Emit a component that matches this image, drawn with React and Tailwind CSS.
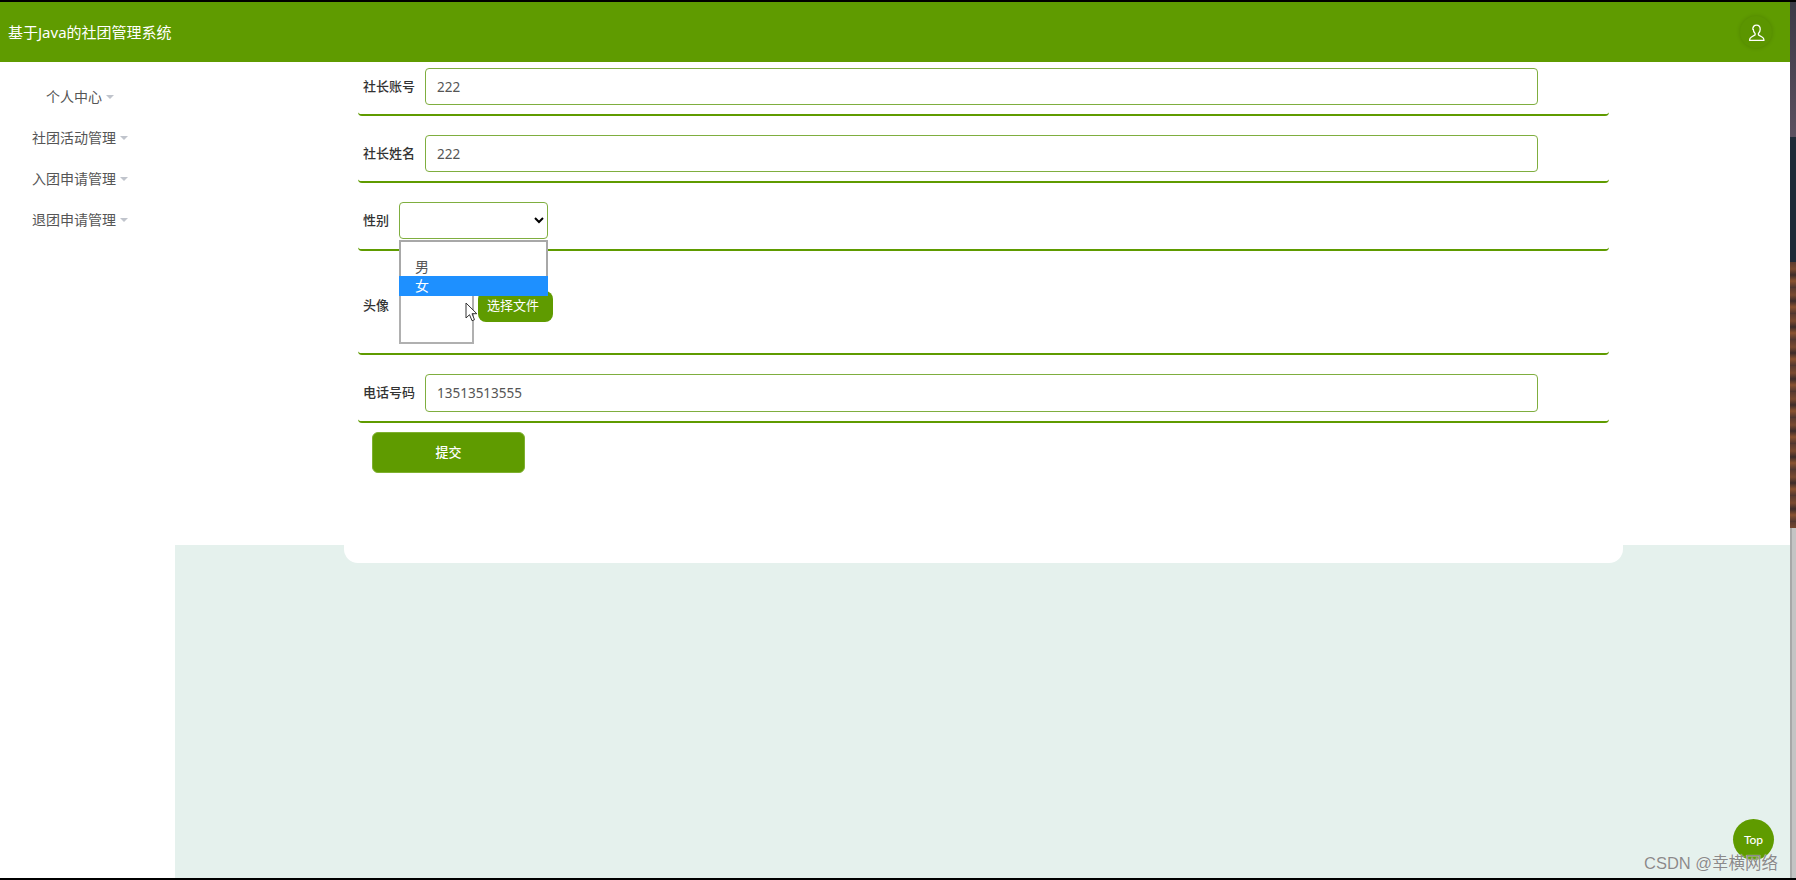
import React from 'react'

const font = "font-['Noto_Sans','Noto_Sans_CJK_SC',sans-serif]"

const navItems = ['个人中心', '社团活动管理', '入团申请管理', '退团申请管理']

const FieldRow = ({ label, value, first, last }) => (
  <div className={`flex items-center gap-[10px] pl-[5px] rounded-[4px] border-b-2 border-[#5f9b00] ${first ? 'pt-[6px]' : 'pt-[19px]'} ${last ? 'pb-[9px]' : 'pb-[9px]'}`}>
    <label className="text-[13px] font-medium text-[#333]">{label}</label>
    <input
      defaultValue={value}
      className={`w-[1113px] px-[11px] rounded-[4px] border border-[#7fae3f] bg-white text-[13.5px] text-[#555] outline-none ${last ? 'h-[38px]' : 'h-[37px]'}`}
    />
  </div>
)

const App = () => {
  return (
    <div className={`${font} relative w-[1796px] h-[880px] overflow-hidden flex flex-col bg-black py-[2px]`}>
      <div className="flex flex-1 min-h-0">
        <div className="relative w-[1790px] flex flex-col">
          {/* header */}
          <header className="h-[60px] shrink-0 bg-[#5f9b00] flex items-center justify-between pl-[8px] pr-[18px]">
            <div className="text-[15px] text-white">基于Java的社团管理系统</div>
            <div className="w-[32px] h-[32px] rounded-full bg-[#5b9500] shadow-[0_0_4px_rgba(0,0,0,0.15)] flex items-center justify-center">
              <svg width="17" height="17" viewBox="0 0 16 16" fill="none" stroke="#fff" strokeWidth="1.2" strokeLinejoin="round">
                <path d="M4.500 5c0-2.400 1.500-4 3.500-4s3.500 1.600 3.500 4c0 1.800-.7 3.200-1.700 4v1.200l3.400 2c1 .6 1.800 1.300 1.800 2.800v.5H1.500v-.5c0-1.500.8-2.200 1.800-2.800l3.400-2V9c-1-.8-1.700-2.200-1.700-4z" />
              </svg>
            </div>
          </header>

          <div className="flex flex-1 min-h-0">
            {/* sidebar */}
            <aside className="w-[175px] shrink-0 bg-white pt-[14px]">
              <nav className="w-[160px]">
                {navItems.map((item) => (
                  <div key={item} className="h-[41px] flex items-center justify-center gap-[4px] text-[14px] text-[#555]">
                    <span>{item}</span>
                    <span className="w-0 h-0 border-x-[4px] border-x-transparent border-t-[4px] border-t-[#c0c4cc]" />
                  </div>
                ))}
              </nav>
            </aside>

            {/* content */}
            <main className="flex-1 bg-[linear-gradient(#ffffff_483px,#e5f1ed_483px)]">
              <div className="ml-[169px] w-[1279px] h-[501px] bg-white rounded-b-[14px] px-[14px]">
                <FieldRow label="社长账号" value="222" first />
                <FieldRow label="社长姓名" value="222" />

                <div className="flex items-center gap-[10px] pl-[5px] pt-[19px] pb-[10px] rounded-[4px] border-b-2 border-[#5f9b00]">
                  <label className="text-[13px] font-medium text-[#333]">性别</label>
                  <div className="relative">
                    <select className="block w-[149px] h-[37px] rounded-[4px] border border-[#7fae3f] bg-white text-[14px] outline-none">
                      <option></option>
                      <option>男</option>
                      <option>女</option>
                    </select>
                    {/* open select popup with the stale box below it */}
                    <div className="absolute left-0 top-[38px] w-[75px] h-[104px] border-2 border-[#b0b0b0] bg-white z-10" />
                    <div className="absolute left-0 top-[38px] w-[149px] h-[56px] border-x-2 border-t-2 border-[#a8a8a8] bg-white z-10 text-[14px] text-[#555] pt-[16px]">
                      <div className="h-[18px] pl-[14px] leading-[18px]">男</div>
                      <div className="h-[20px] -mx-[2px] pl-[16px] leading-[20px] bg-[#1e90ff] text-white">女</div>
                    </div>
                  </div>
                </div>

                <div className="h-[104px] pt-[8px] flex items-center pl-[5px] rounded-[4px] border-b-2 border-[#5f9b00]">
                  <label className="w-[36px] text-[13px] font-medium text-[#333]">头像</label>
                  <div className="w-[79px] shrink-0" />
                  <button className="w-[75px] h-[31px] rounded-[8px] bg-[#5f9b00] text-white text-[13px] pl-[9px] text-left">选择文件</button>
                </div>

                <FieldRow label="电话号码" value="13513513555" last />

                <button className="mt-[9px] ml-[14px] w-[153px] h-[41px] rounded-[6px] border border-[#7fb030] bg-[#5f9b00] text-white text-[13px] font-medium">
                  提交
                </button>
              </div>
            </main>
          </div>

          {/* mouse cursor */}
          <svg className="absolute left-[465px] top-[300px] z-20" width="13" height="20" viewBox="0 0 13 20">
            <path d="M1 1v15l3.500-3.300 2.500 6 2.500-1-2.500-6h4.800z" fill="#fff" stroke="#333" strokeWidth="1" strokeLinejoin="round" />
          </svg>

          <button className="absolute left-[1733px] top-[817px] w-[41px] h-[41px] rounded-full bg-[#5f9b00] text-white text-[12px] font-medium font-['Lato',sans-serif]">
            Top
          </button>
          <div className="absolute left-[1644px] top-[849px] text-[16.5px] leading-[24px] whitespace-nowrap text-[#8a8a8a] font-['Liberation_Sans','Noto_Sans_CJK_SC',sans-serif] [text-shadow:0_0_1px_#fff]">
            CSDN @幸横网络
          </div>
        </div>

        {/* sliver of the desktop behind the window */}
        <div className="w-[6px] flex flex-col">
          <div className="h-[135px] bg-[linear-gradient(#3b3a46,#5c5060)]" />
          <div className="h-[125px] bg-[#1f2a38]" />
          <div className="h-[266px] bg-[repeating-linear-gradient(#5a3b30_0px,#7a4a30_7px,#3d2c2a_13px,#8a5230_19px,#4d3530_26px)]" />
          <div className="flex-1 bg-[#c4c4c4] border-l-2 border-[#a8a8a8]" />
        </div>
      </div>
    </div>
  )
}

export default App
